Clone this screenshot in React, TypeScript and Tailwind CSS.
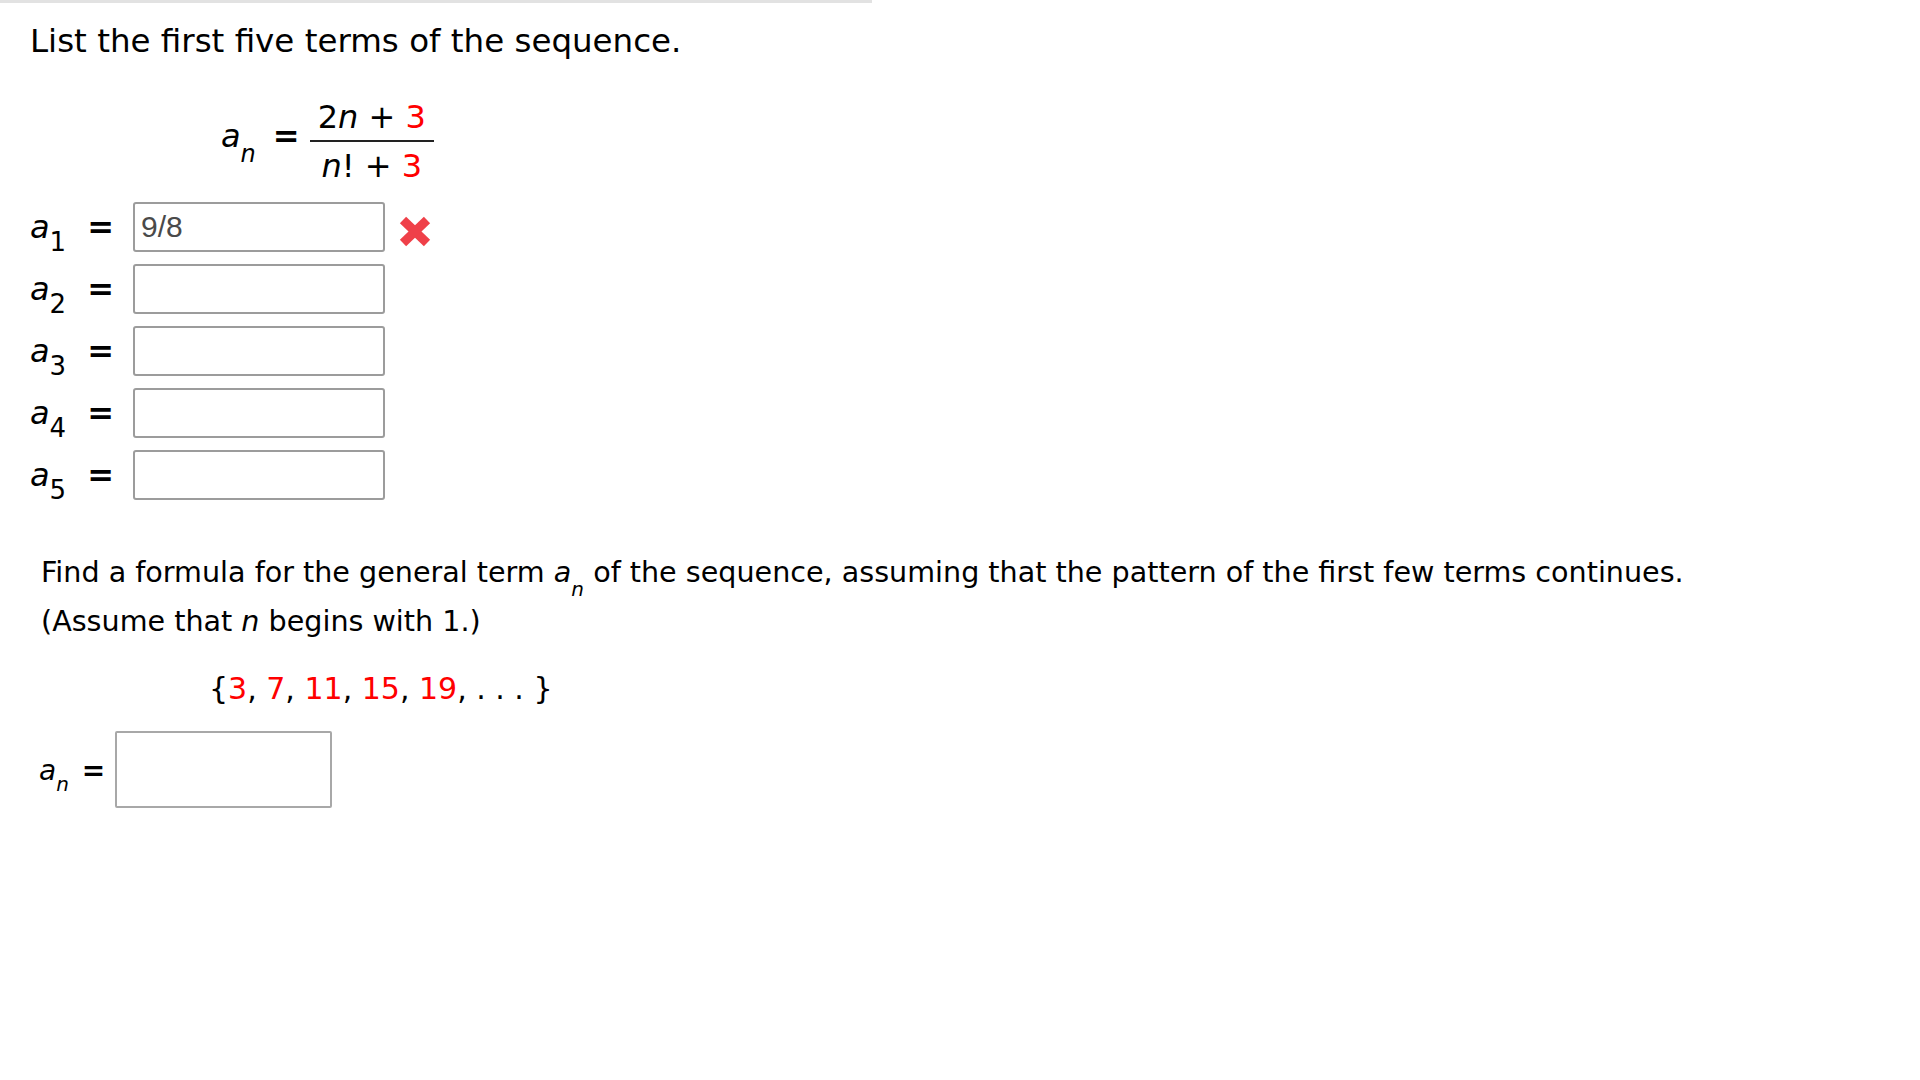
import React from "react";

const red = "text-[#ff0000]";

function Red({ children }: { children: React.ReactNode }) {
  return <span className={red}>{children}</span>;
}

function WrongMark() {
  return (
    <svg width="36" height="33" viewBox="0 0 36 33" className="ml-[12px] mt-[13px] shrink-0">
      <defs>
        <filter id="soft" x="-20%" y="-20%" width="140%" height="140%">
          <feGaussianBlur stdDeviation="0.7" />
        </filter>
      </defs>
      <g stroke="#ef4048" strokeWidth="9" filter="url(#soft)">
        <line x1="6" y1="5" x2="30" y2="28" />
        <line x1="30" y1="5" x2="6" y2="28" />
      </g>
    </svg>
  );
}

function TermRow({ index, value, wrong }: { index: number; value?: string; wrong?: boolean }) {
  return (
    <div className="flex h-[50px] items-start">
      <div className="w-[103px] whitespace-nowrap text-[32px] leading-[50px]">
        <span className="italic">a</span>
        <span className="relative top-[13px] text-[26px]">{index}</span>
        <span className="ml-[21px] font-bold">=</span>
      </div>
      <input
        type="text"
        readOnly
        defaultValue={value ?? ""}
        className="h-[50px] w-[252px] rounded-[3px] border-2 border-[#9c9c9c] bg-white px-[6px] font-['Liberation_Sans',Arial,sans-serif] text-[30px] text-[#4a4a4a] outline-none"
      />
      {wrong ? <WrongMark /> : null}
    </div>
  );
}

export default function App() {
  return (
    <div className="min-h-screen w-full bg-white font-['DejaVu_Sans',Verdana,sans-serif] text-black">
      <div className="h-[3px] w-[872px] bg-[#e2e2e2]" />
      <div className="pl-[30px]">
        <h1 className="mt-[18px] text-[32.5px] font-normal leading-[40px]">
          List the first five terms of the sequence.
        </h1>

        {/* given formula */}
        <div className="mt-[38px] flex items-start pl-[191px]">
          <div className="mt-[19px] whitespace-nowrap text-[32px] leading-[36px]">
            <span className="italic">a</span>
            <span className="relative top-[15px] text-[24px] italic">n</span>
            <span className="ml-[17px] font-bold">=</span>
          </div>
          <div className="ml-[10px] flex flex-col items-center whitespace-nowrap text-[32px] leading-[36px]">
            <div className="px-[8px] pb-[5px]">
              2<span className="italic">n</span> + <Red>3</Red>
            </div>
            <div className="h-[2px] w-full bg-[#222]" />
            <div className="pt-[6px]">
              <span className="italic">n</span>! + <Red>3</Red>
            </div>
          </div>
        </div>

        <div className="mt-[18px] flex flex-col gap-[12px]">
          <TermRow index={1} value="9/8" wrong />
          <TermRow index={2} />
          <TermRow index={3} />
          <TermRow index={4} />
          <TermRow index={5} />
        </div>

        {/* second part */}
        <div className="mt-[49px] pl-[11px] text-[28.6px] leading-[46px]">
          <p>
            Find a formula for the general term <span className="italic">a</span>
            <span className="relative top-[14px] text-[20px] italic">n</span> of the sequence, assuming that the
            pattern of the first few terms continues.
          </p>
          <p>
            (Assume that <span className="italic">n</span> begins with 1.)
          </p>
        </div>

        <div className="mt-[21px] whitespace-nowrap pl-[179px] text-[30px] leading-[48px]">
          {"{"}
          <Red>3</Red>, <Red>7</Red>, <Red>11</Red>, <Red>15</Red>, <Red>19</Red>, . . . {"}"}
        </div>

        <div className="mt-[18px] flex items-start pl-[9px]">
          <div className="whitespace-nowrap text-[28px] leading-[80px]">
            <span className="italic">a</span>
            <span className="relative top-[11px] text-[20px] italic">n</span>
            <span className="ml-[13px] font-bold">=</span>
          </div>
          <input
            type="text"
            readOnly
            className="ml-[10px] h-[77px] w-[217px] rounded-[2px] border-2 border-[#a8a8a8] bg-white px-[6px] font-['Liberation_Sans',Arial,sans-serif] text-[30px] outline-none"
          />
        </div>
      </div>
    </div>
  );
}
